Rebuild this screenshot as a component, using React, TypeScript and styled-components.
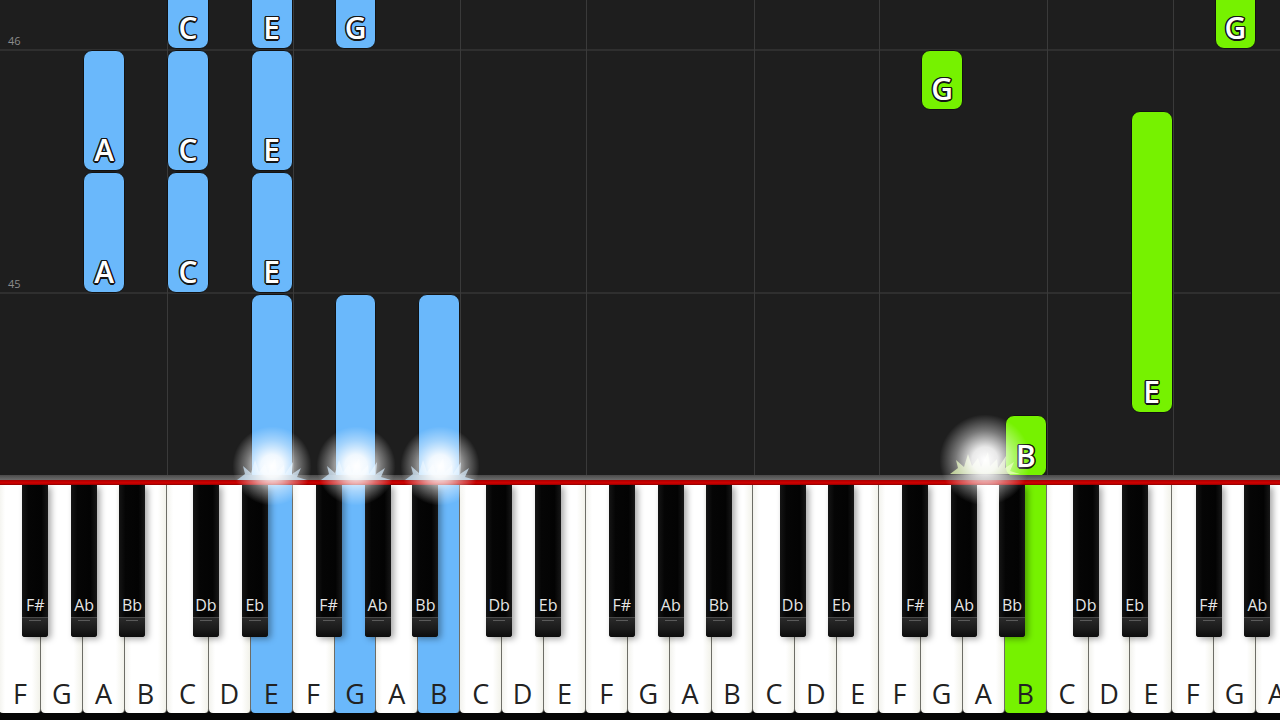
import styled, { createGlobalStyle } from 'styled-components';

const KEY_W = 41.9;
const KEY_X0 = -0.6;
const WHITE_NAMES = ['F', 'G', 'A', 'B', 'C', 'D', 'E'];
const WHITE_COUNT = 31;

// black key sits after these white keys, shifted from the boundary
const BLACKS: Record<string, { name: string; shift: number }> = {
  F: { name: 'F#', shift: -6 },
  G: { name: 'Ab', shift: 1 },
  A: { name: 'Bb', shift: 7 },
  C: { name: 'Db', shift: -3 },
  D: { name: 'Eb', shift: 4 },
};

const BLUE = '#6ab8fb';
const GREEN = '#76f200';

type Tone = 'blue' | 'green';

const pressed: Record<number, Tone> = { 6: 'blue', 8: 'blue', 10: 'blue', 24: 'green' };

const notes: { key: number; top: number; bottom: number; tone: Tone; label?: string }[] = [
  { key: 2, top: 50, bottom: 171, tone: 'blue', label: 'A' },
  { key: 2, top: 172, bottom: 293, tone: 'blue', label: 'A' },
  { key: 4, top: -20, bottom: 49, tone: 'blue', label: 'C' },
  { key: 4, top: 50, bottom: 171, tone: 'blue', label: 'C' },
  { key: 4, top: 172, bottom: 293, tone: 'blue', label: 'C' },
  { key: 6, top: -20, bottom: 49, tone: 'blue', label: 'E' },
  { key: 6, top: 50, bottom: 171, tone: 'blue', label: 'E' },
  { key: 6, top: 172, bottom: 293, tone: 'blue', label: 'E' },
  { key: 6, top: 294, bottom: 490, tone: 'blue' },
  { key: 8, top: -20, bottom: 49, tone: 'blue', label: 'G' },
  { key: 8, top: 294, bottom: 490, tone: 'blue' },
  { key: 10, top: 294, bottom: 490, tone: 'blue' },
  { key: 22, top: 50, bottom: 110, tone: 'green', label: 'G' },
  { key: 27, top: 111, bottom: 413, tone: 'green', label: 'E' },
  { key: 24, top: 415, bottom: 477, tone: 'green', label: 'B' },
  { key: 29, top: -20, bottom: 49, tone: 'green', label: 'G' },
];

const glows: { x: number; y: number; size: number; spark: string }[] = [
  { x: 272, y: 466, size: 80, spark: '#bfe3ff' },
  { x: 356, y: 466, size: 80, spark: '#bfe3ff' },
  { x: 440, y: 466, size: 80, spark: '#bfe3ff' },
  { x: 985, y: 460, size: 92, spark: '#dfff9a' },
];

const keyLeft = (i: number) => KEY_X0 + i * KEY_W;

const GlobalStyle = createGlobalStyle`
  html, body {
    margin: 0;
    padding: 0;
    background: #1e1e1e;
    overflow: hidden;
  }
  * { box-sizing: border-box; }
`;

const Screen = styled.div`
  position: relative;
  width: 1280px;
  height: 720px;
  display: flex;
  flex-direction: column;
  overflow: hidden;
  background: #1e1e1e;
  font-family: 'Open Sans', 'Noto Sans', sans-serif;
`;

const Roll = styled.div`
  position: relative;
  height: 475px;
  flex: 0 0 auto;
  overflow: hidden;
  background: #1e1e1e;
`;

// a bar line carries its bar number above its left end
const BarLine = styled.div<{ $y: number }>`
  position: absolute;
  left: 0;
  right: 0;
  top: ${(p) => p.$y}px;
  height: 2px;
  background: #2f2f2f;
`;

const BarNumber = styled.span`
  position: absolute;
  left: 8px;
  bottom: 4px;
  font-size: 11px;
  line-height: 12px;
  color: #8c8c8c;
`;

const OctaveLine = styled.div`
  position: absolute;
  top: 0;
  bottom: 0;
  width: 1px;
  background: #3a3a3a;
`;

const Note = styled.div<{ $tone: Tone }>`
  position: absolute;
  width: ${KEY_W}px;
  display: flex;
  align-items: flex-end;
  justify-content: center;
  padding-bottom: 5px;
  border: 1.5px solid #121212;
  border-radius: 9px;
  background: ${(p) => (p.$tone === 'blue' ? BLUE : GREEN)};
`;

const NoteLabel = styled.span`
  font-size: 30px;
  line-height: 30px;
  font-weight: 600;
  color: #fff;
  text-shadow:
    -1.5px 0 0 #151515, 1.5px 0 0 #151515, 0 -1.5px 0 #151515, 0 1.5px 0 #151515,
    -1px -1px 0 #151515, 1px -1px 0 #151515, -1px 1px 0 #151515, 1px 1px 0 #151515;
`;

const Rail = styled.div`
  height: 5px;
  flex: 0 0 auto;
  background: linear-gradient(#4a4a4a, #6d6d6d);
`;

const RedLine = styled.div`
  height: 5px;
  flex: 0 0 auto;
  background: linear-gradient(#a80000, #d40000 60%, #8a0000);
  position: relative;
  z-index: 2;
`;

const Keyboard = styled.div`
  position: relative;
  flex: 1;
  background: #050505;
`;

const WhiteRow = styled.div`
  display: flex;
  height: 228px;
  margin-left: ${KEY_X0}px;
`;

const WhiteKey = styled.div<{ $tone?: Tone }>`
  flex: 0 0 ${KEY_W}px;
  display: flex;
  align-items: flex-end;
  justify-content: center;
  padding-bottom: 3px;
  border-right: 1px solid #6d6d66;
  border-radius: 0 0 4px 4px;
  background: ${(p) =>
    p.$tone === 'blue'
      ? BLUE
      : p.$tone === 'green'
        ? GREEN
        : 'linear-gradient(90deg, #f3f3ee 0%, #ffffff 15%, #ffffff 80%, #f2f2ea 100%)'};
  font-size: 27px;
  line-height: 32px;
  color: #222;
`;

const BlackKey = styled.div`
  position: absolute;
  top: 0;
  width: 26px;
  height: 152px;
  display: flex;
  flex-direction: column;
  align-items: center;
  justify-content: flex-end;
  border-radius: 0 0 3px 3px;
  background: linear-gradient(90deg, #151515 0%, #050505 25%, #030303 75%, #171717 100%);
  box-shadow: 3px 2px 6px rgba(0, 0, 0, 0.35);
`;

const BlackLabel = styled.span`
  font-size: 16px;
  line-height: 16px;
  color: #e6e6e6;
  margin-bottom: 4px;
`;

const BlackFoot = styled.div`
  width: 100%;
  height: 20px;
  border-top: 1px solid #4a4a4a;
  border-radius: 0 0 3px 3px;
  background: linear-gradient(#2a2a2a, #1a1a1a 60%, #0c0c0c);
  display: flex;
  justify-content: center;
`;

const FootShine = styled.div`
  width: 12px;
  height: 1px;
  margin-top: 2px;
  background: #5a5a5a;
`;

const Glow = styled.div`
  position: absolute;
  border-radius: 50%;
  pointer-events: none;
  z-index: 5;
  background: radial-gradient(
    circle,
    rgba(255, 255, 255, 1) 0%,
    rgba(255, 255, 255, 0.9) 20%,
    rgba(255, 255, 255, 0.4) 45%,
    rgba(255, 255, 255, 0) 70%
  );
`;

const Sparks = styled.svg`
  position: absolute;
  z-index: 4;
  pointer-events: none;
`;

function SparkBurst({ x, y, color }: { x: number; y: number; color: string }) {
  return (
    <Sparks width="70" height="26" viewBox="0 0 70 26" style={{ left: x - 35, top: y - 10 }}>
      <polygon
        points="0,24 8,18 6,10 14,17 18,4 22,16 28,8 31,17 38,2 40,16 47,9 48,18 56,6 55,18 64,12 60,21 70,24"
        fill={color}
        opacity="0.7"
      />
    </Sparks>
  );
}

function PianoRoll() {
  const octaveLines: number[] = [];
  for (let i = 0; i <= WHITE_COUNT; i++) {
    const n = WHITE_NAMES[i % 7];
    if (n === 'C' || n === 'F') octaveLines.push(Math.round(keyLeft(i)));
  }
  return (
    <Roll>
      <BarLine $y={49}>
        <BarNumber>46</BarNumber>
      </BarLine>
      <BarLine $y={292}>
        <BarNumber>45</BarNumber>
      </BarLine>
      {octaveLines.map((x) => (
        <OctaveLine key={x} style={{ left: x }} />
      ))}
      {notes.map((n, i) => (
        <Note
          key={i}
          $tone={n.tone}
          style={{ left: keyLeft(n.key), top: n.top, height: n.bottom - n.top }}
        >
          {n.label && <NoteLabel>{n.label}</NoteLabel>}
        </Note>
      ))}
    </Roll>
  );
}

function Piano() {
  const whites = Array.from({ length: WHITE_COUNT }, (_, i) => WHITE_NAMES[i % 7]);
  const blacks: { name: string; x: number }[] = [];
  whites.forEach((n, i) => {
    const b = BLACKS[n];
    if (b) blacks.push({ name: b.name, x: keyLeft(i + 1) + b.shift - 13 });
  });
  return (
    <Keyboard>
      <WhiteRow>
        {whites.map((n, i) => (
          <WhiteKey key={i} $tone={pressed[i]}>
            {n}
          </WhiteKey>
        ))}
      </WhiteRow>
      {blacks.map((b) => (
        <BlackKey key={b.x} style={{ left: b.x }}>
          <BlackLabel>{b.name}</BlackLabel>
          <BlackFoot>
            <FootShine />
          </BlackFoot>
        </BlackKey>
      ))}
    </Keyboard>
  );
}

export default function App() {
  return (
    <>
      <GlobalStyle />
      <Screen>
        <PianoRoll />
        <Rail />
        <RedLine />
        <Piano />
        {glows.map((g, i) => (
          <SparkBurst key={`s${i}`} x={g.x} y={g.y} color={g.spark} />
        ))}
        {glows.map((g, i) => (
          <Glow
            key={i}
            style={{ left: g.x - g.size / 2, top: g.y - g.size / 2, width: g.size, height: g.size }}
          />
        ))}
      </Screen>
    </>
  );
}
